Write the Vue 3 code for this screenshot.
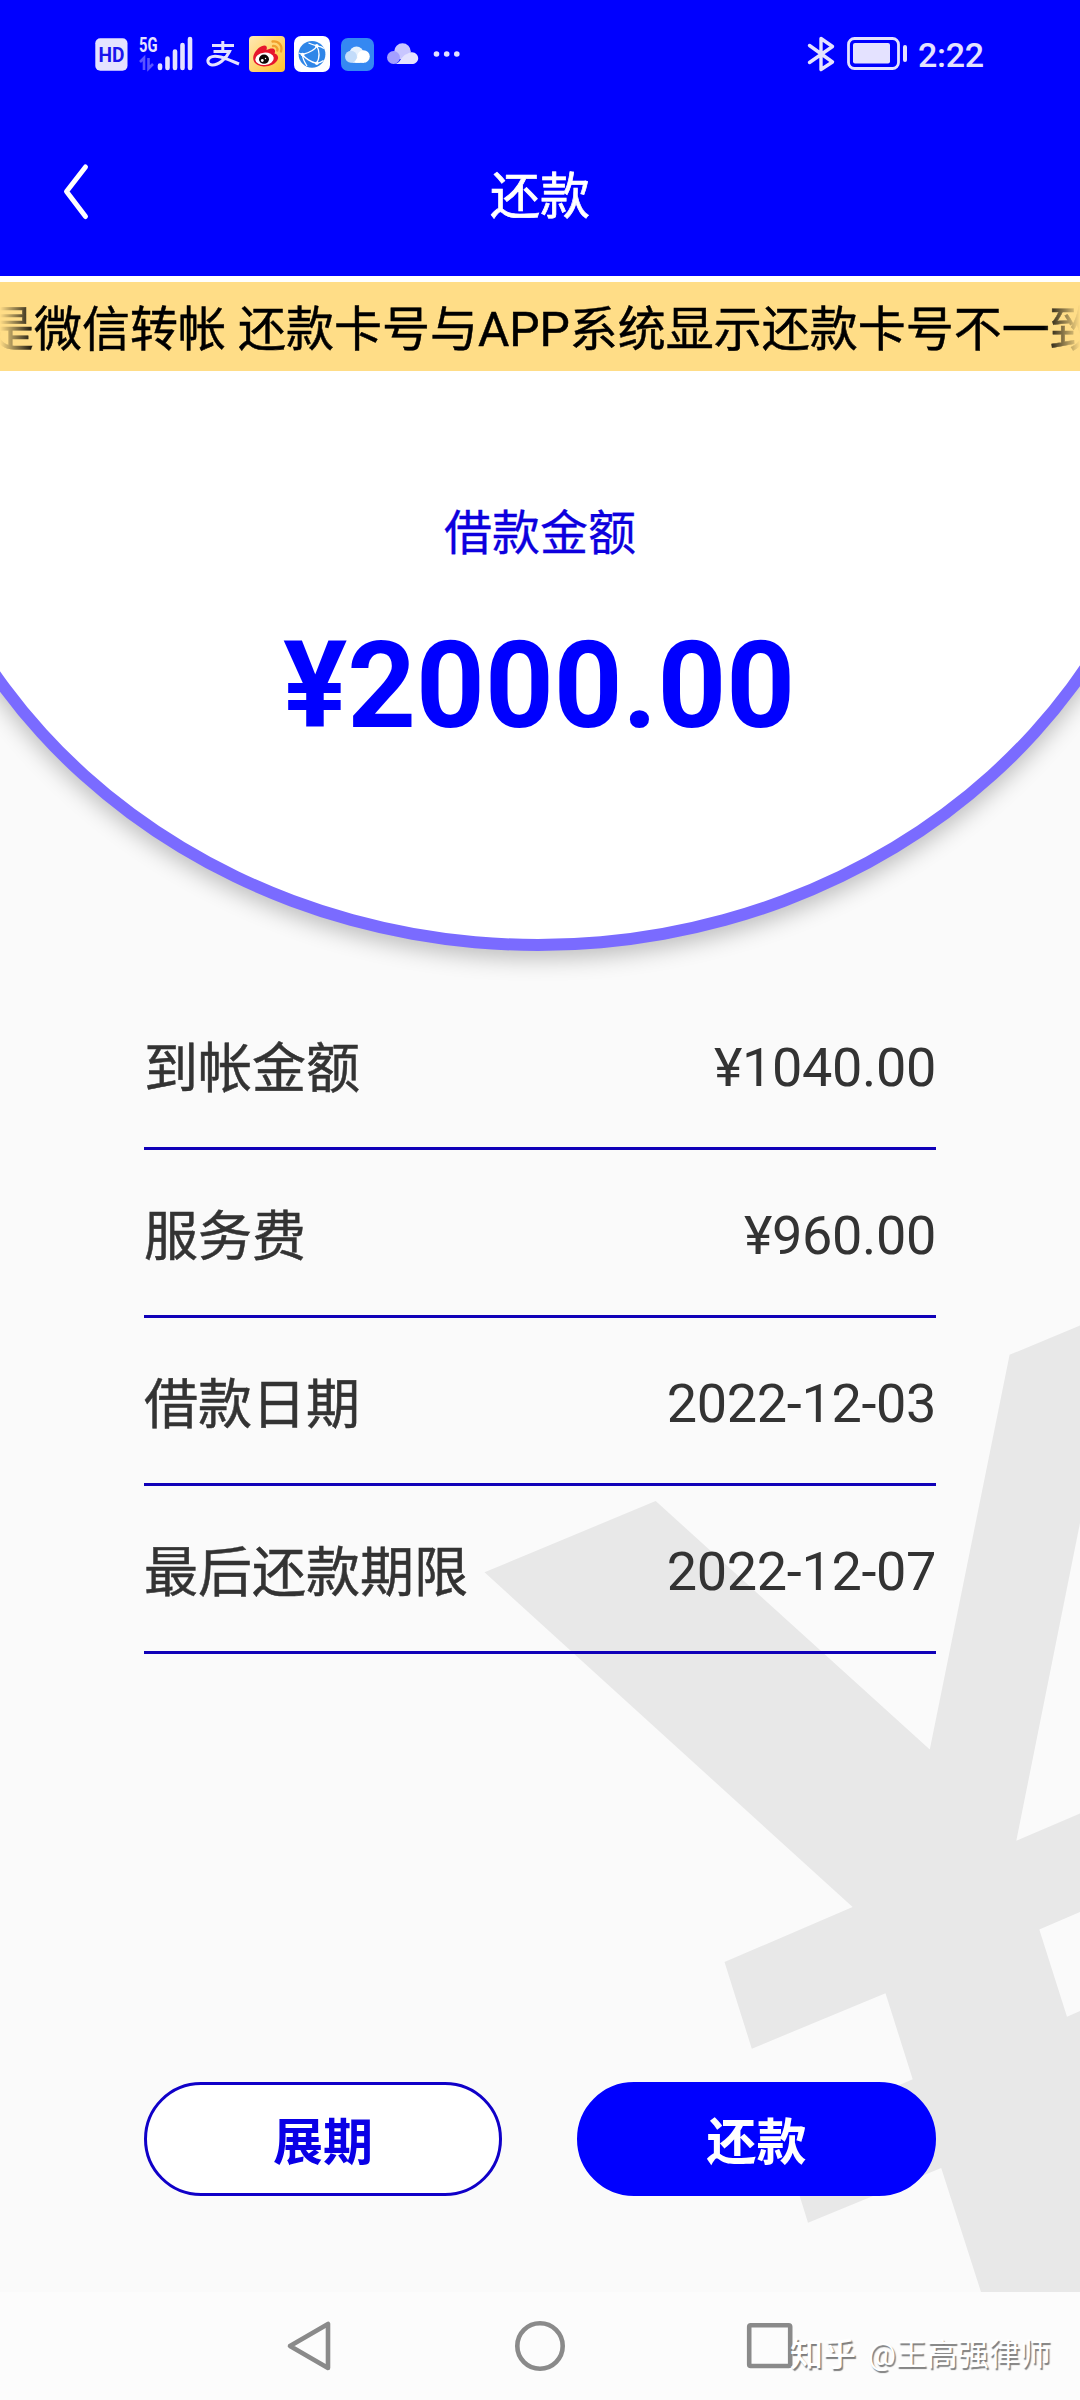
<script setup>
const rows = [
  { label: '到帐金额', value: '¥1040.00' },
  { label: '服务费', value: '¥960.00' },
  { label: '借款日期', value: '2022-12-03' },
  { label: '最后还款期限', value: '2022-12-07' },
]
const notice = '是微信转帐 还款卡号与APP系统显示还款卡号不一致'
</script>

<template>
  <div class="screen">
    <header class="header">
      <div class="status">
        <div class="status-left">
          <svg class="hd" width="33" height="33" viewBox="0 0 33 33">
            <rect x=".3" y=".3" width="32.2" height="32.4" rx="5" fill="#e4e2ff" />
            <text x="16.4" y="24" text-anchor="middle" textLength="26" lengthAdjust="spacingAndGlyphs" class="hd-text">HD</text>
          </svg>
          <svg class="signal" width="54" height="36" viewBox="0 0 54 36">
            <text x="0" y="15.5" textLength="18.500" lengthAdjust="spacingAndGlyphs" class="g-text">5G</text>
            <path d="M1 26 5 22V34M9.500 22V32.500l4.500-4.500" fill="none" stroke="#5a54ff" stroke-width="2.600" />
            <g stroke="#e4e2ff" stroke-width="4.600" stroke-linecap="round">
              <path d="M21 29.500V32M28.500 22.500V32M36 15.500V32M43.500 9V32M51 3V32" />
            </g>
          </svg>
          <svg class="zhi" width="34" height="28" viewBox="0 0 34 28" fill="none" stroke="#e4e2ff" stroke-width="3">
            <path d="M6 5.500H28M16.800 1V11M7.500 11.500H23.500C20 19 12 25.500 6 25C1.500 24.500.500 20 4 17.500C10 13.500 22 19.500 33 24" />
          </svg>
          <svg class="app weibo" width="36" height="36" viewBox="0 0 36 36">
            <defs>
              <linearGradient id="wb" x1="0" y1="0" x2="1" y2="1">
                <stop offset="0" stop-color="#ffe9b5" />
                <stop offset="1" stop-color="#ffc22e" />
              </linearGradient>
            </defs>
            <rect width="36" height="36" rx="4" fill="url(#wb)" />
            <path d="M4.200 22C4.200 16 11 9.500 15.500 9.500C18 9.500 18.200 11.500 17.500 14C21 12 25.500 11.500 26 14.500C26.200 15.500 26 16.500 25.500 17.500C28 18.200 29.500 20 29 22.500C28 27.500 21 30.500 15 30.500C9 30.500 4.200 27 4.200 22Z" fill="#e6162d" />
            <ellipse cx="15.500" cy="22.800" rx="9.300" ry="6.200" fill="#fff" transform="rotate(-6 15.500 22.800)" />
            <ellipse cx="15" cy="23.200" rx="5" ry="4.600" fill="#0b0808" />
            <circle cx="13.300" cy="24.500" r="1.400" fill="#fff" />
            <circle cx="16.500" cy="22.500" r=".7" fill="#fff" />
            <path d="M23.500 5.500C29.500 4.500 34 10 32 15.500M24 10C27 9.600 29 12 28.300 14.500" fill="none" stroke="#f0a02c" stroke-width="2.300" stroke-linecap="round" />
          </svg>
          <svg class="app" width="36" height="36" viewBox="0 0 36 36">
            <rect width="36" height="36" rx="7" fill="#fff" />
            <circle cx="18" cy="18.300" r="13.400" fill="#2f86e8" />
            <path d="M23 9.800C21 14 14 17 8.500 18.500M8.500 18.500C11 22 17 26.500 22.800 27.300M14.500 7C17 8 20 9 22.800 9.800M22.800 9.800C25.500 15 25.500 22 22.800 27.300M22.800 9.800C26 10.200 28 10.600 30 12.500M8.500 18.500C8.500 23 11 27 13 30M22.800 27.300C25 27 27.500 26 29.500 24.500M8.500 18.500 4.800 17" fill="none" stroke="#fff" stroke-width="1.300" />
            <g fill="#fff">
              <circle cx="22.800" cy="9.800" r="1.800" />
              <circle cx="8.500" cy="18.500" r="1.800" />
              <circle cx="22.800" cy="27.300" r="1.800" />
            </g>
          </svg>
          <svg class="cloud-app" width="33" height="33" viewBox="0 0 33 33">
            <rect width="33" height="33" rx="7" fill="#3588f2" />
            <circle cx="15.500" cy="15.500" r="7" fill="#e6f1fd" />
            <circle cx="10" cy="18.800" r="6" fill="#c3dcfa" />
            <path d="M9 24.800C15 24.800 15.500 19 19.500 18V24.800Z" fill="#fff" />
            <circle cx="22.500" cy="18.500" r="6.300" fill="#fff" />
            <path d="M14 24.800H23V20H18Z" fill="#fff" />
          </svg>
          <svg class="cloud" width="32" height="22" viewBox="0 0 32 22">
            <circle cx="15.500" cy="8.500" r="8.300" fill="#c9c6ff" />
            <circle cx="6.500" cy="14.500" r="6.500" fill="#a49fff" />
            <path d="M6.500 21C14 21 14 12.500 20 11C26 6.500 31.500 11 31.200 15.500C31 19 28 21 25 21Z" fill="#e4e2ff" />
          </svg>
          <svg class="dots" width="28" height="8" viewBox="0 0 28 8" fill="#e4e2ff">
            <circle cx="3.500" cy="4" r="2.800" /><circle cx="13.700" cy="4" r="2.800" /><circle cx="23.800" cy="4" r="2.800" />
          </svg>
        </div>
        <div class="status-right">
          <svg width="28" height="36" viewBox="0 0 28 36" fill="none" stroke="#e4e2ff" stroke-width="3.400" stroke-linejoin="round" stroke-linecap="round">
            <path d="M2.500 9.500 25.500 26 14 33.500V2.500L25.500 10.500 2.500 26.500" />
          </svg>
          <svg class="battery" width="61" height="34" viewBox="0 0 61 34">
            <rect x="1.500" y="1.500" width="50" height="30" rx="6" fill="none" stroke="#e4e2ff" stroke-width="2.800" />
            <rect x="6" y="6" width="37" height="20.500" rx="2" fill="#e4e2ff" />
            <rect x="56" y="8" width="4" height="17" rx="2" fill="#e4e2ff" />
          </svg>
          <span class="time">2:22</span>
        </div>
      </div>
      <div class="titlebar">
        <svg class="back" width="28" height="60" viewBox="0 0 28 60" fill="none" stroke="#fff" stroke-width="5" stroke-linecap="round" stroke-linejoin="round">
          <path d="M23.500 5 4.500 29.500 23.500 54.500" />
        </svg>
        <h1>还款</h1>
      </div>
    </header>

    <div class="notice"><p>{{ notice }}</p></div>

    <main class="body">
      <svg class="yen" width="596" height="967" viewBox="484 1325 596 967">
        <path fill="#e8e8e8" d="M484.500 1572.300 655.700 1501 929.800 1749.600 1009.600 1354.800 1080 1325.500V1523L1016.300 1840.800 1080 1813.400V1912L1039.300 1929.500 1067 2016.800 1080 2011V2292H981L941.200 2168 808 2222.800 781 2136 912.700 2079.300 885.500 1993.200 751.800 2048.700 724.500 1962 852.600 1907.100Z" />
      </svg>
      <section class="hero">
        <div class="arc"></div>
        <div class="hero-content">
          <div class="hero-label">借款金额</div>
          <div class="hero-amount">¥2000.00</div>
        </div>
      </section>
      <ul class="rows">
        <li v-for="row in rows" :key="row.label">
          <span class="label">{{ row.label }}</span><span class="value">{{ row.value }}</span>
        </li>
      </ul>
      <div class="actions">
        <button class="btn outline">展期</button>
        <button class="btn solid">还款</button>
      </div>
    </main>

    <nav class="nav">
      <svg width="50" height="54" viewBox="0 0 50 54"><path d="M42 5V49L4 27Z" /></svg>
      <svg width="54" height="54" viewBox="0 0 54 54"><circle cx="27" cy="27" r="22.700" /></svg>
      <svg width="50" height="54" viewBox="0 0 50 54"><rect x="4.200" y="6.200" width="41" height="40.800" rx="1.500" /></svg>
      <div class="credit"><b>知乎</b><span>@王高强律师</span></div>
    </nav>
  </div>
</template>

<style>
body { margin: 0; background: #fafafa; }
</style>

<style scoped>
.screen {
  width: 1080px;
  height: 2400px;
  display: flex;
  flex-direction: column;
  overflow: hidden;
  background: #fafafa;
  font-family: Roboto, "Noto Sans CJK SC", sans-serif;
}
.header { height: 276px; background: #0000ff; color: #fff; flex: none; position: relative; z-index: 2; }
.status { height: 108px; display: flex; justify-content: space-between; align-items: center; padding: 0 96px 0 95px; box-sizing: border-box; }
.status-left, .status-right { display: flex; align-items: center; }
.status svg { display: block; flex: none; overflow: visible; }
.signal { margin-left: 11px; }
.zhi { margin-left: 13px; }
.app { margin-left: 9px; }
.cloud-app { margin-left: 11px; }
.cloud { margin-left: 13px; }
.dots { margin-left: 14px; }
.hd-text { font: 700 21px Roboto, sans-serif; fill: #1a14ee; }
.g-text { font: 700 20px Roboto, sans-serif; fill: #e4e2ff; }
.battery { margin-left: 12px; }
.time { font-size: 34px; line-height: 40px; font-weight: 500; color: #e4e2ff; margin-left: 10px; padding-top: 2px; width: 66px; letter-spacing: -.3px; }
.titlebar { height: 168px; display: grid; grid-template-columns: 120px 1fr 120px; align-items: center; }
.back { margin: 0 0 0 62px; display: block; }
h1 { margin: 9px 0 0; font-size: 50px; line-height: 60px; font-weight: 400; text-align: center; -webkit-text-stroke: .7px #fff; }
.notice {
  height: 89px;
  margin-top: 6px;
  background: #ffdd87;
  box-shadow: 0 0 0 6px #fff;
  flex: none;
  position: relative;
  z-index: 1;
  overflow: hidden;
}
.notice p {
  margin: 0;
  height: 89px;
  line-height: 96px;
  font-size: 48px;
  color: #000;
  white-space: nowrap;
  text-indent: -14px;
  -webkit-text-stroke: .5px #000;
  -webkit-mask-image: linear-gradient(90deg, transparent, #000 36px, #000 1044px, transparent);
  mask-image: linear-gradient(90deg, transparent, #000 36px, #000 1044px, transparent);
}
.body { position: relative; height: 1921px; flex: none; }
.yen { position: absolute; right: 0; bottom: 0; display: block; }
.hero { position: relative; height: 608px; }
.arc {
  position: absolute;
  box-sizing: border-box;
  left: -110px;
  bottom: 28px;
  width: 1296px;
  height: 1172px;
  border-radius: 50%;
  border: 12px solid #7a6bff;
  background: #fff;
  box-shadow: 0 8px 22px rgba(0, 0, 0, .24);
}
.hero-content { position: relative; display: flex; flex-direction: column; align-items: center; padding-top: 131px; }
.hero-label { font-size: 48px; line-height: 64px; color: #0d00de; -webkit-text-stroke: .3px #0d00de; }
.hero-amount { margin-top: 50px; font-size: 120px; line-height: 140px; font-weight: 700; color: #0000ff; margin-left: -2px; }
.rows { position: relative; list-style: none; margin: 0 144px; padding: 3px 0 0; }
.rows li {
  height: 168px;
  box-sizing: border-box;
  border-bottom: 3px solid #1000b8;
  display: flex;
  justify-content: space-between;
  align-items: center;
  font-size: 54px;
  color: #333;
}
.label { -webkit-text-stroke: .5px #333; }
.value { letter-spacing: -.35px; padding-top: 5px; }
.actions { position: relative; margin: 428px 144px 0; display: flex; justify-content: space-between; }
.btn {
  width: 358px;
  height: 114px;
  box-sizing: border-box;
  border-radius: 57px;
  border: 3px solid #1000c8;
  padding: 0 0 3px;
  font: 700 50px Roboto, "Noto Sans CJK SC", sans-serif;
}
.outline { background: #fff; color: #0a00e6; }
.solid { background: #0000ff; color: #fff; border-color: #0000ff; width: 359px; }
.nav {
  height: 108px;
  flex: none;
  background: #fcfcfc;
  position: relative;
  display: flex;
  align-items: center;
  justify-content: center;
  gap: 177.5px;
}
.nav svg { fill: none; stroke: #8a8a8a; stroke-width: 4.6; stroke-linejoin: round; flex: none; display: block; }
.credit {
  position: absolute;
  left: 790px;
  top: 41px;
  display: flex;
  align-items: center;
  gap: 12px;
  line-height: 44px;
  color: #fff;
  font-size: 31px;
  text-shadow: 1.500px 1.500px 1px rgba(0, 0, 0, .5);
  white-space: nowrap;
}
.credit b { font-size: 33px; font-weight: 500; }
</style>
